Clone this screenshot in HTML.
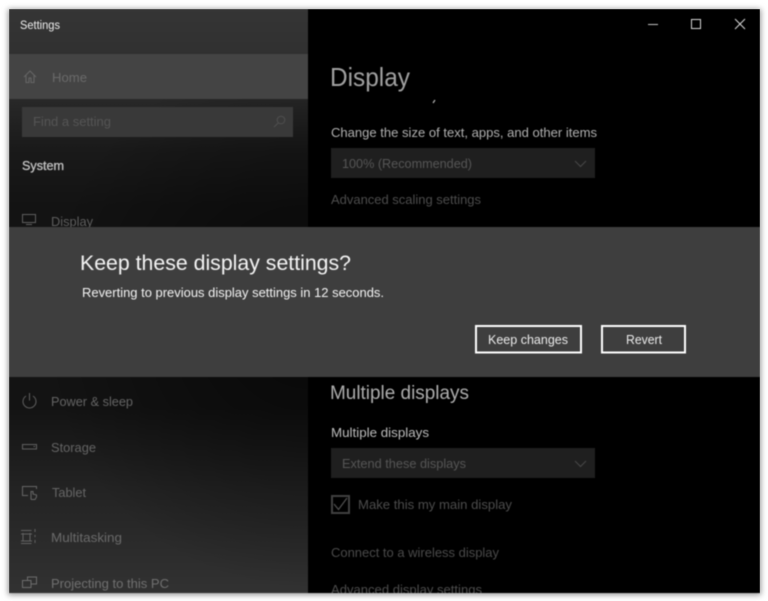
<!DOCTYPE html>
<html><head><meta charset="utf-8"><title>Settings</title>
<style>
html,body{margin:0;padding:0;background:#fff;width:768px;height:601px;overflow:hidden}
svg{display:block;position:absolute;left:0;top:0}
text{font-family:"Liberation Sans",sans-serif;font-size:13px}
</style></head><body>
<svg width="768" height="601" viewBox="0 0 768 601" xmlns="http://www.w3.org/2000/svg">
<defs>
<linearGradient id="side" x1="0" y1="0" x2="0" y2="1">
<stop offset="0" stop-color="#353535"/><stop offset=".12" stop-color="#2e2e2e"/><stop offset=".24" stop-color="#1a1a1a"/><stop offset=".34" stop-color="#131313"/><stop offset=".68" stop-color="#131313"/><stop offset=".82" stop-color="#232323"/><stop offset="1" stop-color="#323232"/>
</linearGradient>
<radialGradient id="dark" gradientUnits="userSpaceOnUse" cx="308" cy="320" r="270">
<stop offset="0" stop-color="#000" stop-opacity=".6"/><stop offset="1" stop-color="#000" stop-opacity="0"/>
</radialGradient>
<filter id="sh" x="-5%" y="-5%" width="110%" height="110%" color-interpolation-filters="sRGB"><feGaussianBlur stdDeviation="3"/></filter>
<filter id="soft" x="0" y="0" width="100%" height="100%" color-interpolation-filters="sRGB"><feGaussianBlur stdDeviation="0.45"/></filter>
<clipPath id="win"><rect x="9" y="9" width="751" height="584"/></clipPath>
</defs>
<rect x="8" y="9" width="753" height="586" fill="#999" filter="url(#sh)"/>
<g filter="url(#soft)">
<g clip-path="url(#win)">
<rect x="9" y="9" width="751" height="584" fill="#000"/>
<rect x="9" y="9" width="299" height="584" fill="url(#side)"/>
<rect x="9" y="9" width="299" height="584" fill="url(#dark)"/>
<rect x="9" y="54" width="299" height="45" fill="#444"/>
<rect x="22" y="107" width="271" height="30" fill="#393939"/>

<text x="20" y="29" fill="#f0f0f0" textLength="40" lengthAdjust="spacingAndGlyphs" style="font-size:11.5px">Settings</text>
<path d="M24 77 30 71 36 77M26 75.500V82.500H29V78H31V82.500H34V75.500" fill="none" stroke="#666" stroke-width="1"/>
<text x="52" y="82" fill="#6a6a6a" textLength="35" lengthAdjust="spacingAndGlyphs">Home</text>
<text x="33" y="126" fill="#555" textLength="78" lengthAdjust="spacingAndGlyphs">Find a setting</text>
<circle cx="281" cy="120" r="3.800" fill="none" stroke="#505050"/><path d="M278.200 123 274 127" stroke="#505050"/>
<text x="22" y="170" fill="#c4c4c4" stroke="#c4c4c4" stroke-width=".3" textLength="42" lengthAdjust="spacingAndGlyphs">System</text>
<path d="M22.500 214.500H35.500V222.500H22.500ZM26 224.500H32" fill="none" stroke="#5e5e5e"/>
<text x="51" y="226" fill="#5e5e5e" textLength="42" lengthAdjust="spacingAndGlyphs">Display</text>

<path d="M26 396A6.500 6.500 0 1 0 33 396M29.500 393V400.500" fill="none" stroke="#606060"/>
<text x="51" y="406" fill="#646464" textLength="82" lengthAdjust="spacingAndGlyphs">Power &amp; sleep</text>
<path d="M22.500 444.500H36.500V449H22.500ZM33.500 446.500H35" fill="none" stroke="#606060"/>
<text x="51" y="452" fill="#646464" textLength="45" lengthAdjust="spacingAndGlyphs">Storage</text>
<path d="M28 495.500H22.500V486.500H36.500V489M31 499V491.500H33V494L36.500 495V497L35 499.500H31.500Z" fill="none" stroke="#666"/>
<text x="52" y="497" fill="#666" textLength="34" lengthAdjust="spacingAndGlyphs">Tablet</text>
<path d="M21 530.500H31.500M23 533V541M30 533V541M21 534H32M21 541H32M21 543.500H31.500M35 529V532M35 535V537M35 540V543" fill="none" stroke="#626262"/>
<text x="51" y="542" fill="#6a6a6a" textLength="71" lengthAdjust="spacingAndGlyphs">Multitasking</text>
<path d="M27.500 580V577H36.500V584H31M22.500 580.500H31V587.500H22.500Z" fill="none" stroke="#6c6c6c"/>
<text x="51" y="588" fill="#707070" textLength="118" lengthAdjust="spacingAndGlyphs">Projecting to this PC</text>

<path d="M648 24.500H658" stroke="#c0c0c0"/>
<rect x="691.500" y="19.500" width="9" height="9" fill="none" stroke="#d8d8d8"/>
<path d="M735 19 745 29M745 19 735 29" stroke="#d8d8d8"/>
<text x="330" y="86" fill="#a0a0a0" style="font-size:26px" textLength="80" lengthAdjust="spacingAndGlyphs">Display</text>
<path d="M435 100 433 103" stroke="#aaa" stroke-width="1.300"/>
<text x="331" y="137" fill="#b0b0b0" textLength="266" lengthAdjust="spacingAndGlyphs">Change the size of text, apps, and other items</text>
<rect x="331" y="148" width="264" height="30" fill="#1f1f1f"/>
<text x="342" y="168" fill="#565656" textLength="130" lengthAdjust="spacingAndGlyphs">100% (Recommended)</text>
<path d="M575 161 580.500 166.500 586 161" fill="none" stroke="#484848"/>
<text x="331" y="204" fill="#4c4c4c" textLength="150" lengthAdjust="spacingAndGlyphs">Advanced scaling settings</text>

<text x="330" y="399" fill="#adadad" style="font-size:19px" textLength="139" lengthAdjust="spacingAndGlyphs">Multiple displays</text>
<text x="331" y="437" fill="#bcbcbc" textLength="98" lengthAdjust="spacingAndGlyphs">Multiple displays</text>
<rect x="331" y="448" width="264" height="30" fill="#1f1f1f"/>
<text x="342" y="468" fill="#565656" textLength="124" lengthAdjust="spacingAndGlyphs">Extend these displays</text>
<path d="M575 461 580.500 466.500 586 461" fill="none" stroke="#484848"/>
<rect x="332" y="496" width="17" height="17" fill="none" stroke="#404040" stroke-width="2"/>
<path d="M334 504 338.500 509.500 347 498" fill="none" stroke="#505050" stroke-width="1.200"/>
<text x="358" y="509" fill="#4c4c4c" textLength="154" lengthAdjust="spacingAndGlyphs">Make this my main display</text>
<text x="331" y="557" fill="#4a4a4a" textLength="168" lengthAdjust="spacingAndGlyphs">Connect to a wireless display</text>
<text x="331" y="594" fill="#4c4c4c" textLength="151" lengthAdjust="spacingAndGlyphs">Advanced display settings</text>

<rect x="9" y="227" width="751" height="150" fill="#3e3e3e"/>
<text x="80" y="270" fill="#f4f4f4" style="font-size:21px" textLength="271" lengthAdjust="spacingAndGlyphs">Keep these display settings?</text>
<text x="82" y="297" fill="#f4f4f4" textLength="302" lengthAdjust="spacingAndGlyphs">Reverting to previous display settings in 12 seconds.</text>
<rect x="476" y="326" width="105" height="26.500" fill="none" stroke="#fff" stroke-width="2"/>
<text x="488" y="344" fill="#ececec" textLength="80" lengthAdjust="spacingAndGlyphs">Keep changes</text>
<rect x="602" y="326" width="83" height="26.500" fill="none" stroke="#fff" stroke-width="2"/>
<text x="626" y="344" fill="#ececec" textLength="36" lengthAdjust="spacingAndGlyphs">Revert</text>
</g>
</g>
</svg>
</body></html>
